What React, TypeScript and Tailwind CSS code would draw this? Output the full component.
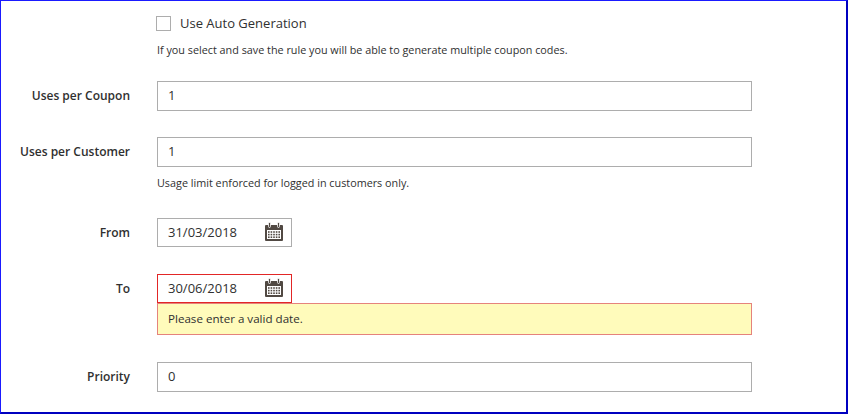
const CalendarIcon = () => (
  <svg width="20" height="20" viewBox="0 0 20 20" className="shrink-0">
    <rect x="1" y="3" width="18" height="16" rx="1" fill="#514943" />
    <rect x="3" y="8" width="14" height="9" fill="#fff" />
    <rect x="4.5" y="0.5" width="2" height="5" rx="1" fill="#514943" stroke="#fff" strokeWidth="0.8" />
    <rect x="13.5" y="0.5" width="2" height="5" rx="1" fill="#514943" stroke="#fff" strokeWidth="0.8" />
    {[0, 1, 2].map((r) =>
      [0, 1, 2, 3, 4].map((c) => (
        <rect key={`${r}-${c}`} x={4 + c * 2.6} y={9.2 + r * 2.6} width="1.6" height="1.6" fill="#514943" />
      ))
    )}
  </svg>
);

const Row = ({ label, children, top = "mt-0" }: { label: string; children: React.ReactNode; top?: string }) => (
  <div className={`flex ${top}`}>
    <label className="w-[129px] shrink-0 pt-[6px] text-right text-[12px] font-semibold leading-[18px] text-[#303030]">
      {label}
    </label>
    <div className="ml-[27px] w-[595px]">{children}</div>
  </div>
);

const TextInput = ({ value }: { value: string }) => (
  <div className="flex h-[30px] w-full items-center border border-[#adadad] bg-white px-[10px] text-[13px] text-[#303030]">
    {value}
  </div>
);

const DateInput = ({ value, error }: { value: string; error?: boolean }) => (
  <div
    className={`flex h-[29px] w-[135px] items-center justify-between border bg-white pl-[10px] pr-[7px] text-[13px] text-[#303030] ${
      error ? "border-[#e22626]" : "border-[#adadad]"
    }`}
  >
    {value}
    <CalendarIcon />
  </div>
);

export default function App() {
  return (
    <div
      className="h-[414px] w-[848px] overflow-hidden border border-r-2 border-b-2 border-[#1a1aff] border-r-[#0000c0] border-b-[#0000c0] bg-white"
      style={{ fontFamily: '"Open Sans", sans-serif' }}
    >
      <div className="ml-[155px] mt-[13px] flex items-center">
        <div className="h-[15px] w-[15px] border border-[#adadad] bg-white" />
        <span className="ml-[9px] text-[13px] text-[#303030]">Use Auto Generation</span>
      </div>
      <p className="ml-[156px] mt-[8px] text-[10.8px] text-[#303030]">
        If you select and save the rule you will be able to generate multiple coupon codes.
      </p>

      <Row label="Uses per Coupon" top="mt-[23px]">
        <TextInput value="1" />
      </Row>

      <Row label="Uses per Customer" top="mt-[26px]">
        <TextInput value="1" />
        <p className="mt-[8px] text-[10.8px] text-[#303030]">Usage limit enforced for logged in customers only.</p>
      </Row>

      <Row label="From" top="mt-[27px]">
        <DateInput value="31/03/2018" />
      </Row>

      <Row label="To" top="mt-[27px]">
        <DateInput value="30/06/2018" error />
        <div className="flex h-[32px] w-full items-center border border-[#e5837c] bg-[#fffbbb] px-[10px] text-[11.6px] text-[#303030]">
          Please enter a valid date.
        </div>
      </Row>

      <Row label="Priority" top="mt-[27px]">
        <TextInput value="0" />
      </Row>
    </div>
  );
}
